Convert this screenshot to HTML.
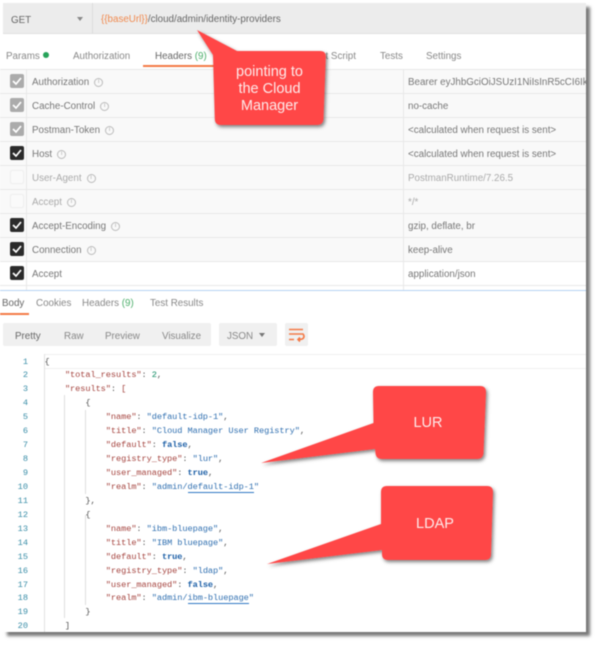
<!DOCTYPE html>
<html><head><meta charset="utf-8">
<style>
html,body{margin:0;padding:0;background:#fff;}
#wrap{position:relative;width:601px;height:647px;overflow:hidden;background:#fff;filter:blur(0.45px);}
#page{position:absolute;left:3px;top:3px;width:583px;height:629px;background:#fff;box-shadow:4px 4px 3px #777;}
.a{position:absolute;white-space:nowrap;}
.t{position:absolute;white-space:nowrap;font:9.8px/14px "Liberation Sans",sans-serif;color:#777;margin-top:2px;}
.row{position:absolute;left:0;width:586px;height:23px;background:#f9f9f9;border-bottom:1px solid #e8e8e8;}
.cb{position:absolute;left:10px;width:14px;height:14px;border-radius:2px;box-sizing:border-box;}
.g{background:#ababab;}.d{background:#2b2b2b;}.e{border:1px solid #eeeeee;background:#fafafa;}
.cb svg{position:absolute;left:2px;top:3px;}
.i{display:inline-block;width:7px;height:7px;border:1px solid #bbb;border-radius:50%;font:6px/7px "Liberation Sans",sans-serif;text-align:center;color:#aaa;margin-left:5px;vertical-align:2px;letter-spacing:0;}
#code{position:absolute;left:44.5px;top:355.5px;font:8.62px/13.95px "Liberation Mono",monospace;letter-spacing:-.06px;color:#555;white-space:pre;}
#code div{height:13.95px;}
.k{color:#a5443f;}.s{color:#2f6fb0;}.n{color:#0f8a62;}.b{color:#1b5ea6;font-weight:bold;}
.u{border-bottom:1px solid #2f78c4;}
#nums{position:absolute;left:0;width:28px;top:355.5px;font:8.62px/13.95px "Liberation Mono",monospace;color:#3a8ea8;text-align:right;}
#nums div{height:13.95px;}
</style></head><body>
<div id="wrap">
<div id="page"></div>

<!-- URL bar -->
<div class="a" style="left:3px;top:3px;width:583px;height:31px;background:#ececec;border-bottom:1px solid #e0e0e0;box-sizing:border-box;"></div>
<div class="a" style="left:92px;top:3px;width:1px;height:31px;background:#dcdcdc;"></div>
<div class="t" style="left:11px;top:12px;color:#666;">GET</div>
<div class="a" style="left:77px;top:17px;width:0;height:0;border-left:3.5px solid transparent;border-right:3.5px solid transparent;border-top:4px solid #888;"></div>
<div class="t" style="left:101px;top:11px;color:#666;"><span style="color:#f08a4f;">{{baseUrl}}</span>/cloud/admin/identity-providers</div>

<!-- Tabs -->
<div class="t" style="left:6px;top:48px;color:#888;">Params</div>
<div class="a" style="left:43px;top:52px;width:6px;height:6px;border-radius:50%;background:#27a35a;"></div>
<div class="t" style="left:73px;top:48px;color:#888;">Authorization</div>
<div class="t" style="left:155px;top:48px;color:#666;">Headers <span style="color:#4fb06d;">(9)</span></div>
<div class="t" style="left:277px;top:48px;color:#888;">Pre-request Script</div>
<div class="t" style="left:380px;top:48px;color:#888;">Tests</div>
<div class="t" style="left:426px;top:48px;color:#888;">Settings</div>
<div class="a" style="left:143px;top:65px;width:80px;height:2px;background:#f47a47;"></div>
<div class="a" style="left:0;top:69px;width:586px;height:1px;background:#e8e8e8;"></div>

<!-- Rows -->
<div class="row" style="top:70px;"></div>
<div class="row" style="top:94px;"></div>
<div class="row" style="top:118px;"></div>
<div class="row" style="top:142px;"></div>
<div class="row" style="top:166px;"></div>
<div class="row" style="top:190px;"></div>
<div class="row" style="top:214px;"></div>
<div class="row" style="top:238px;"></div>
<div class="row" style="top:262px;background:#fff;"></div>
<div class="a" style="left:26px;top:69px;width:1px;height:221px;background:#e8e8e8;"></div>
<div class="a" style="left:403px;top:69px;width:1px;height:221px;background:#e8e8e8;"></div>

<div class="cb g" style="top:74px;"><svg width="10" height="8"><path d="M1 4l3 3 5-6" fill="none" stroke="#fff" stroke-width="1.7"/></svg></div>
<div class="cb g" style="top:98px;"><svg width="10" height="8"><path d="M1 4l3 3 5-6" fill="none" stroke="#fff" stroke-width="1.7"/></svg></div>
<div class="cb g" style="top:122px;"><svg width="10" height="8"><path d="M1 4l3 3 5-6" fill="none" stroke="#fff" stroke-width="1.7"/></svg></div>
<div class="cb d" style="top:146px;"><svg width="10" height="8"><path d="M1 4l3 3 5-6" fill="none" stroke="#fff" stroke-width="1.7"/></svg></div>
<div class="cb e" style="top:170px;"></div>
<div class="cb e" style="top:194px;"></div>
<div class="cb d" style="top:218px;"><svg width="10" height="8"><path d="M1 4l3 3 5-6" fill="none" stroke="#fff" stroke-width="1.7"/></svg></div>
<div class="cb d" style="top:242px;"><svg width="10" height="8"><path d="M1 4l3 3 5-6" fill="none" stroke="#fff" stroke-width="1.7"/></svg></div>
<div class="cb d" style="top:266px;"><svg width="10" height="8"><path d="M1 4l3 3 5-6" fill="none" stroke="#fff" stroke-width="1.7"/></svg></div>

<div class="t" style="left:32px;top:74px;">Authorization<span class="i">i</span></div>
<div class="t" style="left:32px;top:98px;">Cache-Control<span class="i">i</span></div>
<div class="t" style="left:32px;top:122px;">Postman-Token<span class="i">i</span></div>
<div class="t" style="left:32px;top:146px;">Host<span class="i">i</span></div>
<div class="t" style="left:32px;top:170px;color:#aaa;">User-Agent<span class="i">i</span></div>
<div class="t" style="left:32px;top:194px;color:#aaa;">Accept<span class="i">i</span></div>
<div class="t" style="left:32px;top:218px;">Accept-Encoding<span class="i">i</span></div>
<div class="t" style="left:32px;top:242px;">Connection<span class="i">i</span></div>
<div class="t" style="left:32px;top:266px;">Accept</div>

<div class="t" style="left:408px;top:74px;width:178px;overflow:hidden;">Bearer eyJhbGciOiJSUzI1NiIsInR5cCI6IkpXVCJ9</div>
<div class="t" style="left:408px;top:98px;">no-cache</div>
<div class="t" style="left:408px;top:122px;">&lt;calculated when request is sent&gt;</div>
<div class="t" style="left:408px;top:146px;">&lt;calculated when request is sent&gt;</div>
<div class="t" style="left:408px;top:170px;color:#aaa;">PostmanRuntime/7.26.5</div>
<div class="t" style="left:408px;top:194px;color:#aaa;">*/*</div>
<div class="t" style="left:408px;top:218px;">gzip, deflate, br</div>
<div class="t" style="left:408px;top:242px;">keep-alive</div>
<div class="t" style="left:408px;top:266px;">application/json</div>

<div class="a" style="left:0;top:290px;width:586px;height:1px;background:#b5d3f3;"></div>

<!-- Response tabs -->
<div class="t" style="left:2px;top:295px;color:#666;">Body</div>
<div class="a" style="left:0;top:313px;width:29px;height:2px;background:#f47a47;"></div>
<div class="t" style="left:36px;top:295px;color:#888;">Cookies</div>
<div class="t" style="left:82px;top:295px;color:#888;">Headers <span style="color:#4fb06d;">(9)</span></div>
<div class="t" style="left:150px;top:295px;color:#888;">Test Results</div>

<div class="a" style="left:3px;top:323px;width:208px;height:23px;background:#f0f0f0;border-radius:2px;"></div>
<div class="t" style="left:15px;top:328px;color:#666;">Pretty</div>
<div class="t" style="left:64px;top:328px;color:#888;">Raw</div>
<div class="t" style="left:105px;top:328px;color:#888;">Preview</div>
<div class="t" style="left:162px;top:328px;color:#888;">Visualize</div>
<div class="a" style="left:219px;top:323px;width:58px;height:23px;background:#f0f0f0;border-radius:2px;"></div>
<div class="t" style="left:227px;top:328px;color:#888;">JSON</div>
<div class="a" style="left:259px;top:333px;width:0;height:0;border-left:3.5px solid transparent;border-right:3.5px solid transparent;border-top:4px solid #777;"></div>
<div class="a" style="left:285px;top:323px;width:23px;height:23px;background:#f0f0f0;border-radius:2px;"></div>
<svg class="a" style="left:285px;top:323px;" width="23" height="23"><path d="M4 6.5H18M4 11H18Q20 13.5 18 15.5Q17 16.5 13 16.5M15 14.5L13 16.5L15 18.5M4 16.5H9" fill="none" stroke="#f47a47" stroke-width="1.6"/></svg>

<!-- Editor -->
<div class="a" style="left:44px;top:354px;width:542px;height:13px;border-top:1px solid #efefef;border-bottom:1px solid #efefef;"></div>
<div class="a" style="left:44px;top:354px;width:1px;height:278px;background:#e2e2e2;"></div>
<div class="a" style="left:64px;top:395px;width:1px;height:223px;background:#dedede;"></div>
<div class="a" style="left:85px;top:410px;width:1px;height:84px;background:#dedede;"></div>
<div class="a" style="left:85px;top:515px;width:1px;height:90px;background:#dedede;"></div>

<div id="nums"><div>1</div><div>2</div><div>3</div><div>4</div><div>5</div><div>6</div><div>7</div><div>8</div><div>9</div><div>10</div><div>11</div><div>12</div><div>13</div><div>14</div><div>15</div><div>16</div><div>17</div><div>18</div><div>19</div><div>20</div></div>
<div id="code"><div>{</div><div>    <span class="k">"total_results"</span>: <span class="n">2</span>,</div><div>    <span class="k">"results"</span>: <span style="color:#a5443f">[</span></div><div>        {</div><div>            <span class="k">"name"</span>: <span class="s">"default-idp-1"</span>,</div><div>            <span class="k">"title"</span>: <span class="s">"Cloud Manager User Registry"</span>,</div><div>            <span class="k">"default"</span>: <span class="b">false</span>,</div><div>            <span class="k">"registry_type"</span>: <span class="s">"lur"</span>,</div><div>            <span class="k">"user_managed"</span>: <span class="b">true</span>,</div><div>            <span class="k">"realm"</span>: <span class="s">"admin/<span class="u">default-idp-1</span>"</span></div><div>        },</div><div>        {</div><div>            <span class="k">"name"</span>: <span class="s">"ibm-bluepage"</span>,</div><div>            <span class="k">"title"</span>: <span class="s">"IBM bluepage"</span>,</div><div>            <span class="k">"default"</span>: <span class="b">true</span>,</div><div>            <span class="k">"registry_type"</span>: <span class="s">"ldap"</span>,</div><div>            <span class="k">"user_managed"</span>: <span class="b">false</span>,</div><div>            <span class="k">"realm"</span>: <span class="s">"admin/<span class="u">ibm-bluepage</span>"</span></div><div>        }</div><div>    ]</div></div>

<!-- Callouts -->
<svg class="a" style="left:0;top:0;" width="601" height="647">
<defs><filter id="sh" x="-20%" y="-20%" width="140%" height="140%"><feDropShadow dx="1.5" dy="2" stdDeviation="1.8" flood-color="#000" flood-opacity=".5"/></filter></defs>
<path filter="url(#sh)" fill="#ff4646" d="M197 30L237 51H320Q326 51 325.8 57L323.5 119Q323 125 317 125H221Q215 125 214.8 119L213 55Z"/>
<path filter="url(#sh)" fill="#ff4646" d="M261 463L373.5 423L373 392Q373 386 379 386H480Q486 386 486 392L483.5 453Q483 459 477 459H382Q376 459 375.5 453L375 449Z"/>
<path filter="url(#sh)" fill="#ff4646" d="M267 564L381 524L381 492Q381 486 387 486H487Q493 486 493 492L491 554Q491 560 485 560H388Q382 560 382 554L382 550Z"/>
</svg>
<div class="a" style="left:213px;top:64px;width:113px;text-align:center;font:14.5px/17px 'Liberation Sans',sans-serif;color:#fdeaea;">pointing to<br>the Cloud<br>Manager</div>
<div class="a" style="left:373px;top:415px;width:110px;text-align:center;font:14.5px/17px 'Liberation Sans',sans-serif;color:#fdeaea;">LUR</div>
<div class="a" style="left:381px;top:516px;width:108px;text-align:center;font:14.5px/17px 'Liberation Sans',sans-serif;color:#fdeaea;">LDAP</div>
</div>
</body></html>
